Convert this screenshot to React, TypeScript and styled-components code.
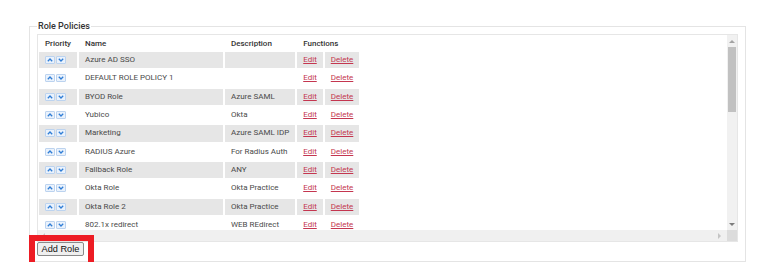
import styled, { createGlobalStyle } from "styled-components";

const GlobalStyle = createGlobalStyle`
  html, body {
    margin: 0;
    padding: 0;
    background: #fff;
    overflow: hidden;
  }
  body {
    font-family: Roboto, "Noto Sans", sans-serif;
  }
`;

const Page = styled.div`
  padding: 21px 22px 0 29px;
`;

const Fieldset = styled.fieldset`
  margin: 0;
  border: 1px solid #e4e4e4;
  padding: 0 7px 5px 7px;
  min-width: 0;
`;

const Legend = styled.legend`
  padding: 0 1px;
  font-size: 9px;
  line-height: 11px;
  font-weight: 500;
  color: #333;
`;

const ScrollBox = styled.div`
  margin-top: 2px;
  height: 206px;
  border: 1px solid #e6e6e6;
  display: grid;
  grid-template-columns: 1fr 10px;
  grid-template-rows: 1fr 11px;
`;

const Viewport = styled.div`
  overflow: hidden;
  min-width: 0;
  min-height: 0;
`;

const Table = styled.table`
  border-collapse: separate;
  border-spacing: 2px;
  margin: 0 0 0 -1px;
  font-size: 8px;
  color: #4a4a4a;
`;

const Th = styled.th<{ $w?: number }>`
  text-align: left;
  font-weight: 500;
  color: #333;
  padding: 0 6px;
  height: 13px;
  line-height: 13px;
  white-space: nowrap;
  width: ${(p) => (p.$w ? `${p.$w}px` : "auto")};
`;

const Row = styled.tr<{ $striped: boolean }>`
  td {
    background: ${(p) => (p.$striped ? "#e6e6e6" : "#fff")};
  }
`;

const Td = styled.td`
  padding: 0 6px;
  height: 16.33px;
  line-height: 16.33px;
  white-space: nowrap;
`;

const Arrows = styled.div`
  display: flex;
  gap: 1px;
  align-items: center;
`;

const ArrowButton = styled.button`
  width: 10px;
  height: 8px;
  padding: 0;
  border: 1px solid #bcd3ef;
  border-radius: 1px;
  background: #eaf2fc;
  display: flex;
  align-items: center;
  justify-content: center;
  svg {
    display: block;
  }
`;

const ActionLink = styled.a`
  color: #c4364f;
  text-decoration: underline;
  cursor: pointer;
`;

const VTrack = styled.div`
  background: #f1f1f1;
  display: flex;
  flex-direction: column;
  align-items: center;
`;

const HTrack = styled.div`
  background: #f0f0f0;
  display: flex;
  align-items: center;
  justify-content: space-between;
  padding: 0 6px 0 4px;
`;

const Corner = styled.div`
  background: #dcdcdc;
`;

const ArrowBox = styled.div`
  height: 12px;
  width: 100%;
  display: flex;
  align-items: center;
  justify-content: center;
`;

const Triangle = styled.span<{ $dir: "up" | "down" | "left" | "right" }>`
  width: 0;
  height: 0;
  border: 3px solid transparent;
  ${(p) =>
    p.$dir === "up"
      ? "border-bottom-color: #a3a3a3; border-top-width: 0;"
      : p.$dir === "down"
        ? "border-top-color: #7c7c7c; border-bottom-width: 0;"
        : p.$dir === "left"
          ? "border-right-color: #c4c4c4; border-left-width: 0;"
          : "border-left-color: #c4c4c4; border-right-width: 0;"}
`;

const Thumb = styled.div`
  width: 8px;
  height: 65px;
  background: #c1c1c1;
`;

const Spacer = styled.div`
  flex: 1;
`;

const ButtonRow = styled.div`
  display: flex;
`;

const Highlight = styled.span`
  position: relative;
  display: inline-block;
  &::after {
    content: "";
    position: absolute;
    left: -8px;
    top: -7px;
    right: -10px;
    bottom: -7px;
    border: 6px solid #ed1c24;
    border-bottom-width: 0;
    pointer-events: none;
  }
`;

const AddButton = styled.button`
  font-family: "Liberation Sans", Arial, sans-serif;
  font-size: 9.2px;
  line-height: 10px;
  color: #111;
  background: #efefef;
  border: 1px solid #8a8a8a;
  border-radius: 2px;
  padding: 1px 3.5px;
  height: 14px;
  display: block;
`;

const Chevron = ({ up }: { up?: boolean }) => (
  <svg width="6" height="4" viewBox="0 0 6 4">
    <path
      d={up ? "M0.8 3.3 L3 1 L5.2 3.3" : "M0.8 0.8 L3 3 L5.2 0.8"}
      fill="none"
      stroke="#2f7dd6"
      strokeWidth="1.3"
    />
  </svg>
);

const roles = [
  { name: "Azure AD SSO", desc: "" },
  { name: "DEFAULT ROLE POLICY 1", desc: "" },
  { name: "BYOD Role", desc: "Azure SAML" },
  { name: "Yubico", desc: "Okta" },
  { name: "Marketing", desc: "Azure SAML IDP" },
  { name: "RADIUS Azure", desc: "For Radius Auth" },
  { name: "Fallback Role", desc: "ANY" },
  { name: "Okta Role", desc: "Okta Practice" },
  { name: "Okta Role 2", desc: "Okta Practice" },
  { name: "802.1x redirect", desc: "WEB REdirect" },
];

export default function App() {
  return (
    <>
      <GlobalStyle />
      <Page>
        <Fieldset>
          <Legend>Role Policies</Legend>
          <ScrollBox>
            <Viewport>
              <Table>
                <thead>
                  <tr>
                    <Th>Priority</Th>
                    <Th $w={132}>Name</Th>
                    <Th>Description</Th>
                    <Th colSpan={2}>Functions</Th>
                  </tr>
                </thead>
                <tbody>
                  {roles.map((r, i) => (
                    <Row key={r.name} $striped={i % 2 === 0}>
                      <Td>
                        <Arrows>
                          <ArrowButton>
                            <Chevron up />
                          </ArrowButton>
                          <ArrowButton>
                            <Chevron />
                          </ArrowButton>
                        </Arrows>
                      </Td>
                      <Td>{r.name}</Td>
                      <Td>{r.desc}</Td>
                      <Td>
                        <ActionLink>Edit</ActionLink>
                      </Td>
                      <Td>
                        <ActionLink>Delete</ActionLink>
                      </Td>
                    </Row>
                  ))}
                </tbody>
              </Table>
            </Viewport>
            <VTrack>
              <ArrowBox>
                <Triangle $dir="up" />
              </ArrowBox>
              <Thumb />
              <Spacer />
              <ArrowBox>
                <Triangle $dir="down" />
              </ArrowBox>
            </VTrack>
            <HTrack>
              <Triangle $dir="left" />
              <Triangle $dir="right" />
            </HTrack>
            <Corner />
          </ScrollBox>
          <ButtonRow>
            <Highlight>
              <AddButton>Add Role</AddButton>
            </Highlight>
          </ButtonRow>
        </Fieldset>
      </Page>
    </>
  );
}
